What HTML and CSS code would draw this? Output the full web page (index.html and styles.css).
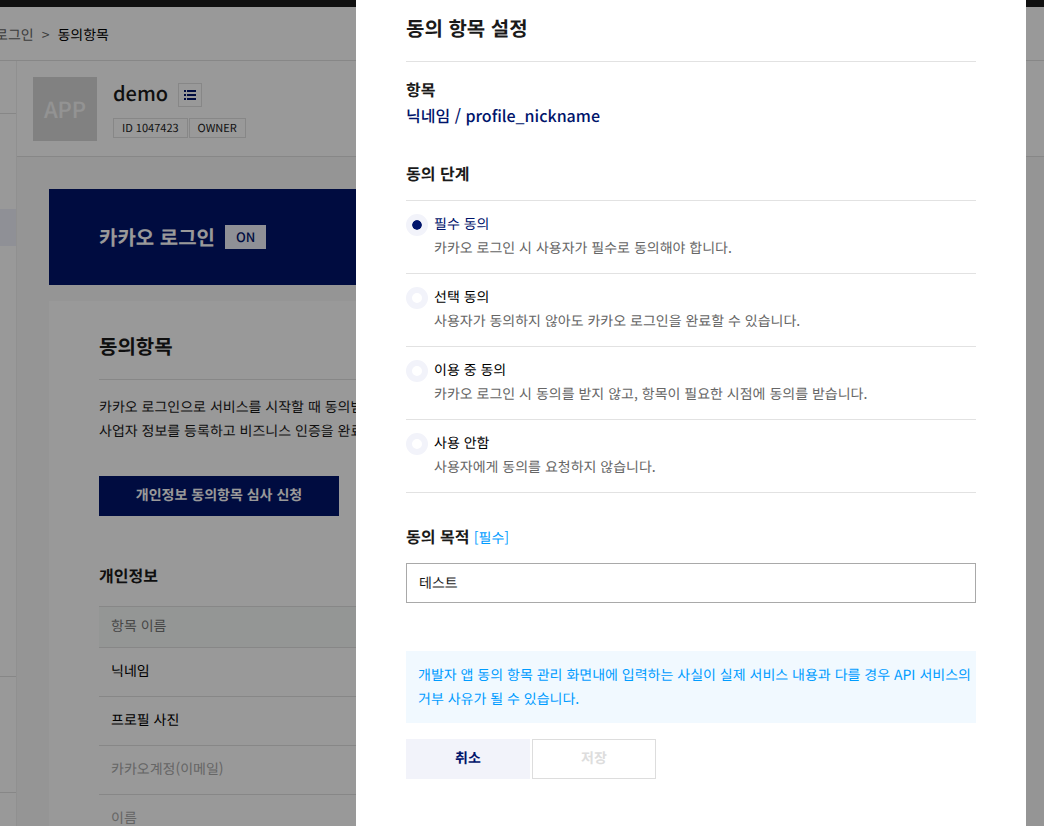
FILE: index.html
```html
<!DOCTYPE html>
<html lang="ko">
<head>
<meta charset="utf-8">
<meta name="viewport" content="width=device-width, initial-scale=1">
<title>동의항목</title>
<link rel="stylesheet" href="styles.css">
</head>
<body>
<div class="page">
  <header class="topbar"></header>
  <nav class="breadcrumb" aria-label="breadcrumb">
    <a href="#">로그인</a>
    <span class="separator">&gt;</span>
    <a href="#" class="current">동의항목</a>
  </nav>
  <div class="body">
    <aside class="sidebar">
      <div class="side-profile"></div>
      <div class="side-group side-group-main"><div class="side-active"></div></div>
      <div class="side-group side-group-sub"></div>
    </aside>
    <main class="main">
      <section class="app-header">
        <div class="app-tile">APP</div>
        <div class="app-info">
          <div class="app-name">
            <h1>demo</h1>
            <button type="button" class="list-button" aria-label="앱 목록">
              <svg viewBox="0 0 12 10" width="12" height="10" shape-rendering="crispEdges" aria-hidden="true">
                <path d="M0 0h2v2H0zM3 0h9v2H3zM0 4h2v2H0zM3 4h9v2H3zM0 8h2v2H0zM3 8h9v2H3z" fill="currentColor"/>
              </svg>
            </button>
          </div>
          <div class="tags"><span class="tag">ID 1047423</span><span class="tag">OWNER</span></div>
        </div>
      </section>
      <div class="content">
        <section class="banner">
          <h2>카카오 로그인</h2>
          <span class="badge">ON</span>
        </section>
        <section class="card">
          <h2 class="card-title">동의항목</h2>
          <p class="card-text">카카오 로그인으로 서비스를 시작할 때 동의받는 항목입니다.<br>사업자 정보를 등록하고 비즈니스 인증을 완료하세요.</p>
          <button type="button" class="review-button">개인정보 동의항목 심사 신청</button>
          <h3 class="table-title">개인정보</h3>
          <table class="items">
            <thead><tr><th scope="col">항목 이름</th></tr></thead>
            <tbody>
              <tr><td>닉네임</td></tr>
              <tr><td>프로필 사진</td></tr>
              <tr class="disabled"><td>카카오계정(이메일)</td></tr>
              <tr class="disabled"><td>이름</td></tr>
            </tbody>
          </table>
        </section>
      </div>
    </main>
  </div>
</div>

<div class="overlay">
  <form class="modal" role="dialog" aria-labelledby="modal-title">
    <h2 class="modal-title" id="modal-title">동의 항목 설정</h2>
    <div class="field">
      <h3>항목</h3>
      <p class="field-value">닉네임 / profile_nickname</p>
    </div>
    <fieldset class="steps">
      <legend>동의 단계</legend>
      <div class="step">
        <input type="radio" name="step" id="step-required" checked>
        <label for="step-required"><span class="step-name">필수 동의</span><span class="step-text">카카오 로그인 시 사용자가 필수로 동의해야 합니다.</span></label>
      </div>
      <div class="step">
        <input type="radio" name="step" id="step-optional">
        <label for="step-optional"><span class="step-name">선택 동의</span><span class="step-text">사용자가 동의하지 않아도 카카오 로그인을 완료할 수 있습니다.</span></label>
      </div>
      <div class="step">
        <input type="radio" name="step" id="step-later">
        <label for="step-later"><span class="step-name">이용 중 동의</span><span class="step-text">카카오 로그인 시 동의를 받지 않고, 항목이 필요한 시점에 동의를 받습니다.</span></label>
      </div>
      <div class="step">
        <input type="radio" name="step" id="step-none">
        <label for="step-none"><span class="step-name">사용 안함</span><span class="step-text">사용자에게 동의를 요청하지 않습니다.</span></label>
      </div>
    </fieldset>
    <div class="purpose">
      <label for="purpose">동의 목적 <span class="required">[필수]</span></label>
      <input type="text" id="purpose" value="테스트">
    </div>
    <p class="notice">개발자 앱 동의 항목 관리 화면내에 입력하는 사실이 실제 서비스 내용과 다를 경우 API 서비스의 거부 사유가 될 수 있습니다.</p>
    <div class="actions">
      <button type="button" class="cancel">취소</button>
      <button type="submit" class="save" disabled>저장</button>
    </div>
  </form>
</div>
</body>
</html>
```
FILE: styles.css
```css
:root {
  --navy: #00146b;
  --blue: #009cff;
  --line: #e2e2e2;
  --pale: #f2f3fa;
  --text: #1a1a1a;
}

* {
  box-sizing: border-box;
}

body {
  margin: 0;
  height: 100vh;
  overflow: hidden;
  background: #fff;
  color: var(--text);
  font-family: "Noto Sans CJK KR", sans-serif;
  font-size: 14px;
  line-height: 24px;
  text-rendering: geometricPrecision;
  word-break: keep-all;
}

h1, h2, h3, p {
  margin: 0;
  font-weight: 700;
}

p {
  font-weight: 400;
}

a {
  color: inherit;
  text-decoration: none;
}

button, input {
  font: inherit;
  text-rendering: inherit;
}

.page {
  display: flex;
  flex-direction: column;
  height: 100vh;
  overflow: hidden;
}

.topbar {
  flex: none;
  height: 7px;
  background: #1b1b1b;
}

.breadcrumb {
  display: flex;
  flex: none;
  gap: 8px;
  margin-left: -5px;
  padding: 16px 0 13px;
  border-bottom: 1px solid var(--line);
  color: #666;
}

.current {
  color: #000;
}

.body {
  display: flex;
  flex: 1;
  min-height: 0;
}

.sidebar {
  flex: none;
  width: 17px;
  border-right: 1px solid #f0f0f0;
}

.side-profile {
  height: 53px;
  border-bottom: 1px solid var(--line);
}

.side-group {
  border-bottom: 1px solid var(--line);
}

.side-group-main {
  height: 563px;
  padding-top: 95px;
}

.side-active {
  height: 37px;
  background: #eef0fa;
}

.side-group-sub {
  height: 116px;
}

.main {
  flex: 1;
  min-width: 0;
  background: #f8f8f8;
}

.app-header {
  display: flex;
  gap: 16px;
  padding: 16px 16px 15px;
  border-bottom: 1px solid var(--line);
  background: #fff;
}

.app-tile {
  display: grid;
  place-items: center;
  width: 64px;
  height: 64px;
  background: #d8d8d8;
  color: #f6f6f6;
  font-size: 22px;
  font-weight: 500;
}

.app-name {
  display: flex;
  align-items: center;
  gap: 10px;
  height: 36px;
}

.app-name h1 {
  padding-bottom: 4px;
  font-size: 20px;
  font-weight: 500;
  line-height: 32px;
}

.list-button {
  display: grid;
  place-items: center;
  width: 24px;
  height: 24px;
  padding: 0;
  border: 1px solid var(--line);
  background: transparent;
  color: var(--navy);
}

.tags {
  display: flex;
  gap: 1px;
  margin-top: 5px;
}

.tag {
  padding: 0 8px;
  border: 1px solid var(--line);
  font-size: 11px;
  line-height: 18px;
}

.content {
  display: flex;
  flex-direction: column;
  gap: 16px;
  padding: 32px;
}

.banner {
  display: flex;
  align-items: center;
  gap: 10px;
  height: 96px;
  padding: 0 50px;
  background: var(--navy);
  color: #fff;
}

.banner h2 {
  font-size: 20px;
  line-height: 32px;
}

.badge {
  padding: 0 11px;
  background: #eef0fa;
  color: var(--navy);
  font-size: 13px;
  font-weight: 500;
}

.card {
  padding: 29px 50px;
  background: #fff;
}

.card-title {
  padding-bottom: 17px;
  border-bottom: 1px solid var(--line);
  font-size: 20px;
  line-height: 32px;
}

.card-text {
  margin: 15px 0 33px;
  white-space: nowrap;
}

.review-button {
  display: block;
  width: 240px;
  height: 40px;
  padding: 0 0 3px;
  border: 0;
  background: var(--navy);
  color: #fff;
  font-weight: 700;
}

.table-title {
  margin: 47px 0 19px;
  font-size: 16px;
}

.items {
  width: 100%;
  border-top: 1px solid var(--line);
  border-spacing: 0;
}

.items th,
.items td {
  padding: 11px 12px 13px;
  border-bottom: 1px solid var(--line);
  text-align: left;
}

.items th {
  padding: 7px 12px 9px;
  background: #f7fbf9;
  color: #777;
  font-weight: 400;
}

.items td {
  color: #000;
}

.items .disabled td {
  color: #aaa;
}

.overlay {
  position: fixed;
  inset: 0;
  display: flex;
  justify-content: flex-end;
  padding-right: 18px;
  background: rgba(0, 0, 0, 0.4);
}

.modal {
  width: 670px;
  max-width: 100%;
  padding: 12px 50px;
  overflow: hidden;
  background: #fff;
}

.modal-title {
  padding-bottom: 17px;
  border-bottom: 1px solid var(--line);
  font-size: 20px;
  line-height: 32px;
}

.field {
  padding: 14px 0 32px;
}

.field h3,
.steps legend,
.purpose label {
  font-size: 16px;
  font-weight: 700;
  line-height: 26px;
}

.field-value {
  color: var(--navy);
  font-size: 16px;
  font-weight: 500;
  line-height: 26px;
}

.steps {
  margin: 0;
  padding: 0;
  border: 0;
  border-bottom: 1px solid var(--line);
}

.steps legend {
  padding: 0 0 14px;
}

.step {
  display: flex;
  align-items: flex-start;
  gap: 6px;
  padding: 11px 0 13px;
  border-top: 1px solid var(--line);
}

.step input {
  flex: none;
  width: 22px;
  height: 22px;
  margin: 2px 0 0;
  appearance: none;
  border: 6px solid var(--pale);
  border-radius: 50%;
  background: #fff;
  background-clip: padding-box;
}

.step input:checked {
  background-color: var(--navy);
}

.step-name,
.step-text {
  display: block;
}

.step-name {
  color: #000;
}

.step input:checked + label .step-name {
  color: var(--navy);
}

.step-text {
  color: #666;
}

.purpose {
  padding: 30px 0 48px;
}

.purpose label {
  display: block;
  margin-bottom: 12px;
}

.required {
  color: var(--blue);
  font-size: 14px;
  font-weight: 400;
}

.purpose input {
  display: block;
  width: 100%;
  height: 40px;
  padding: 0 12px;
  border: 1px solid #a9a9a9;
  border-radius: 0;
  color: var(--text);
}

.notice {
  padding: 12px 2px 12px 12px;
  background: #f1f9ff;
  color: var(--blue);
}

.actions {
  display: flex;
  gap: 2px;
  margin-top: 16px;
}

.actions button {
  width: 124px;
  height: 40px;
  padding: 0 0 3px;
  border: 0;
  font-weight: 700;
}

.actions .cancel {
  background: var(--pale);
  color: var(--navy);
}

.actions .save {
  border: 1px solid #ddd;
  background: #fff;
  color: #ddd;
}
```
